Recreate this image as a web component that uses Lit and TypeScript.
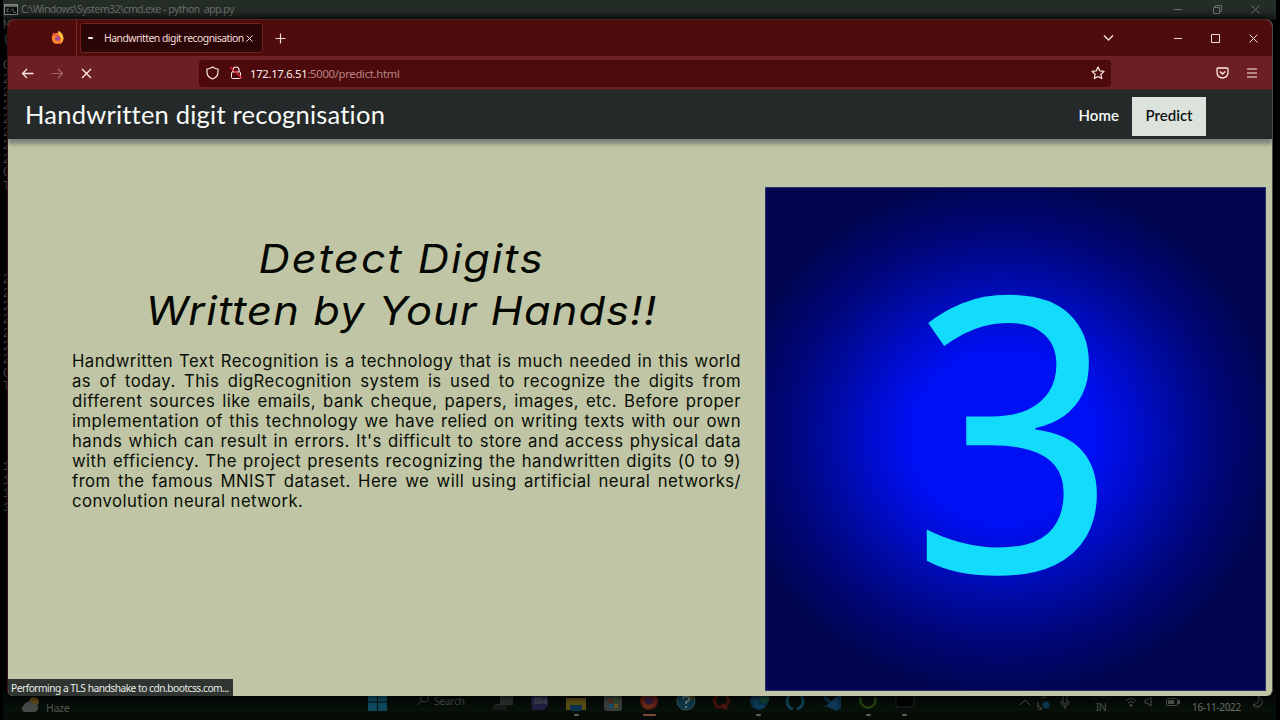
import { LitElement, html, css, svg } from "lit";
import { customElement } from "lit/decorators.js";

const consoleRows = ["M", "(", "", "C", ...Array(7).fill("2"), "C", "T", ...Array(6).fill(""), ...Array(7).fill("2"), "C", "T", ...Array(5).fill(""), ...Array(4).fill("1")].join("\n");

const paragraph = [
  "Handwritten Text Recognition is a technology that is much needed in this world",
  "as of today. This digRecognition system is used to recognize the digits from",
  "different sources like emails, bank cheque, papers, images, etc. Before proper",
  "implementation of this technology we have relied on writing texts with our own",
  "hands which can result in errors. It's difficult to store and access physical data",
  "with efficiency. The project presents recognizing the handwritten digits (0 to 9)",
  "from the famous MNIST dataset. Here we will using artificial neural networks/",
  "convolution neural network.",
];

const flame = svg`
  <circle cx="8" cy="9" r="6" fill="#ff8a1f"/>
  <path d="M2 8C2 5 3 4 4 2.6C4.2 4 5 4.4 6 4.6C8 4.6 9 3 9 1C12 2.5 14.3 5 14.2 9C14 13 11 15 8 15S2 12 2 8Z" fill="#fb5a36"/>
  <path d="M9 1C12 2.5 14.4 5 14.3 9C14 12 12.5 14 10.5 14.7C13 11 12 7 9.5 5.5C8.5 4 8.6 2 9 1Z" fill="#ffc43a"/>
  <circle cx="7.8" cy="9" r="2.6" fill="#a04a9c"/>
  <path d="M2.3 7C4 5.6 6.4 6 7.6 7.4C6 7.4 5 8.4 5.2 9.8C5.8 12 9 12.4 10.8 10.4C10.4 13.4 7.4 14.8 4.8 13.6C2.8 12.4 2 9.6 2.3 7Z" fill="#ff8a2a"/>`;

const taskIcons = [
  { mark: false, art: svg`<path d="M2 8h9v3H2z" fill="#282e2e"/><path d="M7 0h13v9H7z" fill="#282d2c"/><path d="M0 9h13v5H0z" fill="#171c1b"/>` },
  { mark: false, art: svg`<path d="M1 3a8 8 0 0 1 17 1v3a7 7 0 0 1-8 7H2z" fill="#1f1f42"/><path d="M4 1h9v7H4z" fill="#35384a"/><path d="m13 4 4-3v8l-4-3z" fill="#3c3e52"/>` },
  { mark: true, art: svg`<path d="M0 2h20v12H0z" fill="#594d13"/><path d="M4 9h12v6H4z" fill="#0d314a"/>` },
  { mark: false, art: svg`<rect x="1" y="-3" width="18" height="18" rx="3" fill="#363c39"/><path d="M6 3h4v4H6z" fill="#55291f"/><path d="M11 3h4v4h-4z" fill="#264d20"/><path d="M6 8h4v4H6z" fill="#124d6d"/><path d="M11 8h4v4h-4z" fill="#5f5218"/>` },
  { mark: true, hot: true, art: svg`<circle cx="10" cy="5" r="9" fill="#571914"/><circle cx="10" cy="5" r="4.2" fill="#2a193c"/><path d="M3 3q4 9 14 3q-2 7-8 7T3 3z" fill="#632816"/>` },
  { mark: false, art: svg`<circle cx="10" cy="5" r="9" fill="#0f3644" stroke="#38555b"/><path d="m12-3 7 3-4 5z" fill="#433f17"/><path d="M7 3q0-3 3-3t3 3q0 2-3 3v2M10 10v2" fill="none" stroke="#687a7c" stroke-width="1.8"/>` },
  { mark: false, art: svg`<path d="M5-1 2 5l3 6h8l4-6-3-6" fill="none" stroke="#43100d" stroke-width="3"/><path d="m10 8 5 5" stroke="#521913" stroke-width="2"/>` },
  { mark: true, art: svg`<circle cx="10" cy="5" r="9" fill="#092c45"/><path d="M9-2h11v7q-4 4-8 1z" fill="#12402d"/><path d="M3 5q2-5 7-3-4 5 6 8-6 5-11 1z" fill="#0c3b54"/>` },
  { mark: false, art: svg`<path d="M4 0a8 8 0 0 0 4 13M16 0a8 8 0 0 1-4 13" fill="none" stroke="#0f4052" stroke-width="3"/>` },
  { mark: false, art: svg`<path d="m15-3 4 2v13l-4 3L1 2l2-2 12 10z" fill="#0a304a"/><path d="M15-3v18L1 9l2 2L15 0z" fill="#0d3855"/>` },
  { mark: true, art: svg`<path d="M3 1a7.5 7.5 0 0 0 14 6 8 8 0 0 0 0-6" fill="none" stroke="#223f10" stroke-width="2.6"/>` },
  { mark: true, art: svg`<path d="M1-3h18v14H1z" fill="#020303" stroke="#202623"/>` },
];

@customElement("app-root")
export class AppRoot extends LitElement {
  static styles = css`
    :host { display: block; position: relative; width: 1280px; height: 720px; overflow: hidden; background: #000; font-family: "Noto Sans", sans-serif; }
    * { box-sizing: border-box; }
    svg { display: block; flex: none; overflow: visible; }
    .ln { fill: none; stroke: currentColor; }
    .cmd { position: absolute; inset: 0 4px 24px 3px; background: #020302; overflow: hidden; }
    .cmdbar { height: 20px; display: flex; align-items: center; background: linear-gradient(#242e26, #242a26 60%, #151c17); color: #6b726d; padding: 0 16px 2px 1px; font: 10.5px "Open Sans", sans-serif; }
    .cmdbar .name { margin-left: 3px; white-space: pre; flex: 1; letter-spacing: -0.53px; }
    .cmdbtns { display: flex; gap: 29.5px; }
    .console { margin: 0; font: 12px/13.37px "Liberation Mono", monospace; color: #5f635f; }
    .taskbar { position: absolute; left: 3px; right: 4px; bottom: 0; height: 30px; display: flex; background: linear-gradient(#050906 6px, #071009 20px, #060b07); color: #51564f; font-size: 10.5px; }
    .weather { display: flex; width: 365px; padding: 10px 0 0 17px; gap: 6px; letter-spacing: -.3px; }
    .haze { line-height: 16px; }
    .start { width: 50px; padding: 4px 0 0 0; }
    .search { width: 75px; display: flex; gap: 4px; padding-top: 4px; line-height: 15px; color: #3f443f; letter-spacing: -.45px; }
    .apps { display: flex; width: 440px; gap: 16.5px; padding-top: 6px; }
    .app { width: 20px; height: 24px; display: flex; flex-direction: column; align-items: center; justify-content: space-between; }
    .mark { width: 5px; height: 2px; margin-bottom: 4px; background: #5c615c; border-radius: 1px; }
    .hot { width: 13px; background: #80473a; }
    .tray { flex: 1; display: flex; padding-left: 86px; line-height: 12px; color: #4c514b; }
    .tray svg { margin-top: 6px; }
    .mic { margin-left: 4px; }
    .lang { margin-left: 19px; text-align: center; width: 22px; letter-spacing: -.4px; }
    .lang span:first-child { color: #1f2520; }
    .wifi { margin-left: 13px; }
    .bat { margin-left: 7px; }
    .date { margin-left: 12px; width: 49px; font-size: 10px; white-space: nowrap; letter-spacing: -.33px; color: #6a6f69; }
    .moon { margin-left: 2px; }
    .two { line-height: 11.5px; display: flex; flex-direction: column; }
    .window { position: absolute; left: 7px; top: 19px; width: 1266px; height: 677px; display: flex; flex-direction: column; border-radius: 7px 7px 6px 6px; border: 1px solid #532523; border-bottom: 0; border-left-color: #38100f; border-right-color: #44504a; overflow: hidden; background: #c0c6a5; box-shadow: 0 0 8px #000; }
    .tabs { height: 36px; flex: none; display: flex; align-items: center; background: #4e0c0d; color: #f5dfdc; }
    .view { width: 69px; height: 36px; border-right: 1px solid #7b2829; padding: 10px 0 0 42px; }
    .tab { width: 183px; height: 30px; margin: 0 0 0 3px; border: 1px solid #74201f; border-radius: 3px; background: #2b0606; display: flex; align-items: center; padding-left: 7px; font-size: 10.4px; }
    .load { width: 5px; height: 2px; background: #fff0ee; border-radius: 1px; margin-right: 11px; }
    .tabname { width: 142px; white-space: nowrap; letter-spacing: -.5px; }
    .plus { margin-left: 12px; }
    .right { flex: 1; display: flex; justify-content: flex-end; align-items: center; padding-right: 14px; }
    .tools { height: 34px; flex: none; display: flex; align-items: center; background: #6c2024; border-top: 1px solid #722528; border-bottom: 1px solid #4a1c1e; color: #ffe9e7; padding-left: 13px; }
    .tools .fwd { color: #a46668; margin: 0 18px 0 17px; }
    .url { width: 912px; height: 27px; margin-left: 107px; background: #4d0a0c; border-radius: 4px; display: flex; align-items: center; padding: 0 6px 0 7px; font-size: 11.3px; }
    .addr { flex: 1; margin-left: 7px; color: #b78684; letter-spacing: -.31px; }
    .addr b { color: #fff0ed; font-weight: 400; }
    .nav { height: 49px; flex: none; display: flex; align-items: center; background: #25292a; color: #f8fbf7; padding: 0 66px 0 17px; font-family: Lato, sans-serif; box-shadow: 0 5px 4px #7d847b; z-index: 1; }
    .brand { flex: 1; font-size: 25.5px; letter-spacing: .22px; white-space: nowrap; padding-bottom: 2px; }
    .home { font-size: 15px; font-weight: 600; letter-spacing: .05px; margin-right: 13px; }
    .predict { width: 74px; height: 39px; margin-top: 3px; line-height: 36px; text-align: center; background: #dce3dc; color: #101513; font-size: 15px; font-weight: 600; }
    .page { flex: 1; display: flex; padding: 48px 6px 0 64px; position: relative; }
    .copy { width: 669px; color: #090d05; font-family: Inter, sans-serif; padding-top: 46px; }
    .hero { margin: 0 0 0 -10px; text-align: center; font-weight: 400; font-style: italic; font-size: 40px; line-height: 51.5px; color: #050703; white-space: nowrap; transform: scaleX(1.085); }
    .l1 { letter-spacing: 1.7px; }
    .l2 { letter-spacing: 1px; }
    .body { padding-top: 15px; font-size: 16.7px; line-height: 20px; }
    .row { text-align: justify; text-align-last: justify; white-space: nowrap; letter-spacing: .45px; }
    .row:last-child { text-align-last: left; }
    .art { margin-left: 24px; width: 501px; height: 504px; border: 1px solid #29316c; background: radial-gradient(ellipse 276px 262px at 237px 249px, #0010f5 0, #0010f4 33%, #000dd6 45%, #000a9d 64%, #000674 80%, #00054d 100%); }
    .digit { font: 383px "Noto Sans", sans-serif; fill: #12dbfc; }
    .status { position: absolute; left: 0; bottom: 0; width: 225px; height: 17.5px; background: #303532; color: #e9eee8; font-size: 10.2px; line-height: 18px; padding-left: 3px; white-space: nowrap; letter-spacing: -.49px; }
  `;

  render() {
    return html`
      <div class="cmd">
        <div class="cmdbar">
          <svg width="14" height="11" viewBox="0 0 14 11"><rect x=".5" y=".5" width="13" height="10" fill="#080b09" stroke="#858b87"/><path d="M1 2h12" stroke="#858b87" stroke-width="1.5"/><path class="ln" stroke="#a0a5a2" d="M5 5H3v3h2M7 5v1M7 7v1M8.5 4.5l1.5 4h2"/></svg>
          <span class="name">C:\\Windows\\System32\\cmd.exe - python  app.py</span>
          <div class="cmdbtns">
            <svg width="9" height="9"><path class="ln" d="M0 4.5h8"/></svg>
            <svg width="9" height="9"><path class="ln" d="M.5 2.5h6v6h-6zM2.5 2V.5h6v6H7"/></svg>
            <svg width="9" height="9"><path class="ln" d="m.5.5 8 8m0-8-8 8"/></svg>
          </div>
        </div>
        <pre class="console">${consoleRows}</pre>
      </div>

      <div class="taskbar">
        <div class="weather">
          <svg width="20" height="13" viewBox="0 0 20 13"><circle cx="14" cy="2" r="5" fill="#59451a"/><path d="M4 12a4 4 0 0 1 0-7 5 5 0 0 1 9-1 4 4 0 0 1 2 8z" fill="#444a47"/></svg>
          <span class="haze">Haze</span>
        </div>
        <div class="start"><svg width="19" height="17" viewBox="0 0 19 17"><path d="M0 0h9v7.500H0zM10 0h9v7.500h-9zM0 8.500h9V17H0zM10 8.500h9V17h-9z" fill="#0d485e"/></svg></div>
        <div class="search"><svg width="12" height="12"><circle class="ln" cx="6.500" cy="4" r="4"/><path class="ln" d="m3.500 7-4 4"/></svg><span>Search</span></div>
        <div class="apps">
          ${taskIcons.map((i) => html`<div class="app"><svg width="20" height="16" viewBox="0 0 20 16">${i.art}</svg>${i.mark ? html`<span class="mark ${i.hot ? "hot" : ""}"></span>` : ""}</div>`)}
        </div>
        <div class="tray">
          <svg width="12" height="14"><path class="ln" d="m1 9 5-5 5 5"/></svg>
          <svg width="18" height="16" viewBox="2 0 18 16"><path class="ln" d="M9 6v6M13 13H9m0-4 4 4M12 2l5-1"/><circle cx="17" cy="9" r="3.500" fill="#0b3650"/></svg>
          <svg class="mic" width="18" height="14" viewBox="-6 0 18 14"><path class="ln" d="M4 0v6q0 2 2 2t2-2V0M2 5q0 5 4 5t4-5M6 10v3"/></svg>
          <div class="lang two"><span>ENG</span><span>IN</span></div>
          <svg class="wifi" width="12" height="12"><path class="ln" d="M1 5q5-5 10 0M3 7q3-3 6 0M5 9q1-1 2 0v1H5z"/></svg>
          <svg width="21" height="12" viewBox="-8 0 21 12"><path class="ln" d="M0 4h2l4-3v9L2 7H0z"/></svg>
          <svg class="bat" width="15" height="12"><rect class="ln" x="1.500" y="2.500" width="11" height="7" rx="1"/><path d="M3 4h6v4H3zM13 4h2v4h-2z" fill="currentColor"/></svg>
          <div class="date two"><span>&nbsp;</span><span>16-11-2022</span></div>
          <svg class="moon" width="20" height="14" viewBox="-9 0 20 14"><path class="ln" d="M6 0q3 7-5 9 4 4 8 0t-3-9z"/></svg>
        </div>
      </div>

      <div class="window">
        <div class="tabs">
          <div class="view"><svg width="15" height="15" viewBox="0 0 16 16">${flame}</svg></div>
          <div class="tab"><span class="load"></span><span class="tabname">Handwritten digit recognisation</span><svg width="7" height="7"><path class="ln" d="m.5.5 6 6m0-6-6 6"/></svg></div>
          <svg class="plus" width="11" height="11"><path class="ln" stroke-width="1.200" d="M5.500.5v10M.5 5.500h10"/></svg>
          <div class="right">
            <svg width="12" height="8"><path class="ln" stroke-width="1.400" d="m1 1.500 4.500 4.500L10 1.500"/></svg>
            <svg width="67" height="9" viewBox="-59 0 67 9"><path class="ln" d="M0 4.500h8"/></svg>
            <svg width="38" height="9" viewBox="-29 0 38 9"><path class="ln" d="M.5.5h8v8h-8z"/></svg>
            <svg width="38" height="9" viewBox="-29 0 38 9"><path class="ln" d="m.5.5 8 8m0-8-8 8"/></svg>
          </div>
        </div>
        <div class="tools">
          <svg width="13" height="11"><path class="ln" stroke-width="1.300" d="M12.500 5.500H1.500M6 1 1.500 5.500 6 10"/></svg>
          <svg class="fwd" width="12" height="11"><path class="ln" stroke-width="1.200" d="M.5 5.500h11M7 1l4.500 4.500L7 10"/></svg>
          <svg width="11" height="11"><path class="ln" stroke-width="1.400" d="m1 1 9 9m0-9-9 9"/></svg>
          <div class="url">
            <svg width="13" height="14"><path class="ln" stroke-width="1.200" d="M6.500 1Q9.500 3 12 3v3Q12 11 6.500 13 1 11 1 6V3q2.500 0 5.500-2z"/></svg>
            <svg width="24" height="14" viewBox="-11 0 24 14"><rect class="ln" x="1.500" y="6" width="9" height="6.500" rx="1"/><path class="ln" stroke-width="1.200" d="M3 6V4q0-3 3-3t3 3v2"/><path d="m0 1 12 11" stroke="#e22637" stroke-width="1.600"/></svg>
            <span class="addr"><b>172.17.6.51</b>:5000/predict.html</span>
            <svg width="14" height="14"><path class="ln" stroke-width="1.200" stroke-linejoin="round" d="m7 1 1.800 3.900 4.200.500-3.100 2.900.8 4.200L7 10.400l-3.700 2.100.8-4.200L1 5.400l4.200-.5z"/></svg>
          </div>
          <div class="right">
            <svg width="13" height="12"><path class="ln" stroke-width="1.300" d="M2 1h9q1 0 1 1v3q0 5.500-5.500 6Q1 10.500 1 5V2q0-1 1-1z"/><path class="ln" stroke-width="1.400" d="m3.800 4.500 2.700 2.500 2.700-2.500"/></svg>
            <svg width="29" height="10" viewBox="-18 0 29 10"><path class="ln" stroke-width="1.200" d="M0 1h10M0 5h10M0 9h10"/></svg>
          </div>
        </div>
        <div class="nav"><span class="brand">Handwritten digit recognisation</span><span class="home">Home</span><span class="predict">Predict</span></div>
        <div class="page">
          <div class="copy">
            <h1 class="hero"><div class="l1">Detect Digits</div><div class="l2">Written by Your Hands!!</div></h1>
            <div class="body">${paragraph.map((t) => html`<div class="row">${t}</div>`)}</div>
          </div>
          <div class="art"><svg width="499" height="502"><text class="digit" transform="translate(144.500 384) scale(.945 1)">3</text></svg></div>
          <div class="status">Performing a TLS handshake to cdn.bootcss.com...</div>
        </div>
      </div>`;
  }
}
